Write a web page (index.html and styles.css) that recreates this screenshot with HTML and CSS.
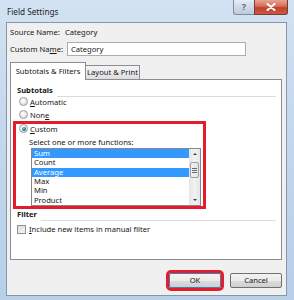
FILE: index.html
```html
<!DOCTYPE html>
<html>
<head>
<meta charset="utf-8">
<link rel="stylesheet" href="styles.css">
</head>
<body>
<div class="window">
  <div class="titlebar">
    <span class="title">Field Settings</span>
    <div class="caption">
      <div class="cap-help">?</div>
      <div class="cap-close">
        <svg width="10" height="8" viewBox="0 0 10 8"><path d="M1.5 1 L8.5 7 M8.5 1 L1.5 7" stroke="#ffffff" stroke-width="2" stroke-linecap="round"/></svg>
      </div>
    </div>
  </div>
  <div class="client">
    <div class="row src"><span class="lbl lbl-src">Source Name:</span><span class="val">Category</span></div>
    <div class="row cust"><span class="lbl lbl-cust">Custom Na<u>m</u>e:</span><div class="input">Category</div></div>
    <div class="tabs">
      <div class="tab active">Subtotals &amp; Filters</div>
      <div class="tab">Layout &amp; Print</div>
    </div>
    <div class="panel">
      <div class="heading"><span class="htext">Subtotals</span><i class="rule"></i></div>
      <div class="opt"><span class="radio"></span><span><u>A</u>utomatic</span></div>
      <div class="opt"><span class="radio"></span><span>Non<u>e</u></span></div>
      <div class="highlight">
        <div class="opt opt-custom"><span class="radio on"></span><span><u>C</u>ustom</span></div>
        <div class="sel-label">Select one or more functions:</div>
        <div class="listbox">
          <div class="items">
            <div class="item sel">Sum</div>
            <div class="item">Count</div>
            <div class="item sel">Average</div>
            <div class="item">Max</div>
            <div class="item">Min</div>
            <div class="item">Product</div>
          </div>
          <div class="scroll">
            <div class="arrow up"></div>
            <div class="thumb"><i></i><i></i><i></i></div>
            <div class="spacer"></div>
            <div class="arrow down"></div>
          </div>
        </div>
      </div>
      <div class="heading heading-filter"><span class="htext">Filter</span><i class="rule"></i></div>
      <div class="opt opt-check"><span class="check"></span><span><u>I</u>nclude new items in manual filter</span></div>
    </div>
    <div class="buttons">
      <div class="btn ok">OK</div>
      <div class="btn">Cancel</div>
    </div>
  </div>
</div>
</body>
</html>
```

FILE: styles.css
```css
html, body {
  margin: 0;
  padding: 0;
}
body {
  width: 294px;
  height: 300px;
  overflow: hidden;
  font-family: "Noto Sans", "DejaVu Sans", sans-serif;
  font-size: 7.6px;
  color: #161616;
  background: #ffffff;
}
u { text-decoration: underline; text-underline-offset: 1px; }

.window {
  width: 294px;
  height: 300px;
  box-sizing: border-box;
  padding: 0 7px 4px 6px;
  display: flex;
  flex-direction: column;
  background: linear-gradient(180deg, #d3e2f2 0%, #c4d8ee 40%, #b8cfe8 100%);
}

.titlebar {
  height: 22px;
  display: flex;
  justify-content: space-between;
  align-items: flex-start;
  flex-shrink: 0;
}
.title {
  margin-top: 6px;
  margin-left: 1px;
  font-size: 8.2px;
  line-height: 12px;
  color: #1e1e1e;
}
.caption {
  display: flex;
  margin-right: -1px;
}
.cap-help {
  width: 21px;
  height: 15px;
  box-sizing: border-box;
  border: 1px solid #7f8fa3;
  border-top: none;
  border-right: none;
  border-radius: 0 0 0 3px;
  background: linear-gradient(180deg, #e6edf5 0%, #cfdae6 50%, #bccadb 100%);
  color: #5a6a7e;
  font-size: 9px;
  line-height: 14px;
  text-align: center;
  font-weight: bold;
}
.cap-close {
  width: 34px;
  height: 15px;
  box-sizing: border-box;
  border: 1px solid #7a3b33;
  border-top: none;
  border-radius: 0 0 3px 0;
  background: linear-gradient(180deg, #e8a493 0%, #d56d57 45%, #c0402b 55%, #cf5a40 100%);
  display: flex;
  align-items: center;
  justify-content: center;
}

.client {
  flex: 1;
  background: #f0f0f0;
  border: 1px solid #8797aa;
  padding: 0 4px 0 3px;
  display: flex;
  flex-direction: column;
}

.row {
  display: flex;
  align-items: center;
}
.src {
  margin-top: 4px;
  height: 10px;
}
.lbl-src { width: 55px; }
.cust {
  margin-top: 5px;
  height: 14px;
}
.lbl-cust { width: 57px; }
.input {
  width: 179px;
  height: 14px;
  box-sizing: border-box;
  border: 1px solid #abadb3;
  background: #ffffff;
  padding-left: 3px;
  line-height: 12px;
}

.tabs {
  margin-top: 6px;
  height: 17px;
  display: flex;
  align-items: flex-end;
  position: relative;
  z-index: 1;
}
.tab {
  box-sizing: border-box;
  border: 1px solid #898c95;
  border-bottom: none;
  text-align: center;
  white-space: nowrap;
}
.tab.active {
  width: 76px;
  height: 18px;
  margin-bottom: -1px;
  background: #ffffff;
  line-height: 16px;
  border-radius: 1px 1px 0 0;
}
.tab:not(.active) {
  width: 54px;
  height: 14px;
  line-height: 13px;
  border-left: none;
  background: linear-gradient(180deg, #f4f4f4 0%, #ebebeb 50%, #dcdcdc 100%);
}

.panel {
  height: 181px;
  box-sizing: border-box;
  border: 1px solid #898c95;
  background: #ffffff;
  display: flex;
  flex-direction: column;
}

.heading {
  display: flex;
  align-items: flex-end;
  height: 10px;
  margin-top: 5px;
  padding-left: 6px;
  padding-right: 5px;
}
.htext {
  font-weight: bold;
  line-height: 10px;
}
.rule {
  flex: 1;
  height: 1px;
  background: #dcdcdc;
  margin-left: 4px;
  margin-bottom: -2px;
}
.heading-filter { margin-top: 0; }

.opt {
  display: flex;
  align-items: center;
  height: 13px;
  padding-left: 8px;
}
.radio {
  width: 9px;
  height: 9px;
  box-sizing: border-box;
  border-radius: 50%;
  border: 1px solid #9a9a9a;
  background: radial-gradient(circle at 40% 35%, #ffffff 0%, #e8e8e8 55%, #d0d0d0 100%);
  margin-right: 2px;
  position: relative;
  flex-shrink: 0;
}
.radio.on::after {
  content: "";
  position: absolute;
  left: 1.5px;
  top: 1.5px;
  width: 4px;
  height: 4px;
  border-radius: 50%;
  background: radial-gradient(circle at 40% 35%, #6fc0e0 0%, #1f6f95 60%, #134e6c 100%);
}

.highlight {
  margin-left: 2px;
  width: 193px;
  height: 88px;
  box-sizing: border-box;
  border: 3px solid #e31d2b;
  display: flex;
  flex-direction: column;
}
.opt-custom {
  height: 9px;
  padding-left: 3px;
}
.sel-label {
  margin-top: 4px;
  height: 10px;
  line-height: 10px;
  padding-left: 13px;
}
.listbox {
  margin-top: 1px;
  margin-left: 15px;
  width: 170px;
  height: 58px;
  box-sizing: border-box;
  border: 1px solid #828790;
  display: flex;
  background: #ffffff;
}
.items {
  flex: 1;
}
.item {
  height: 9.33px;
  line-height: 9.33px;
  padding-left: 2px;
}
.item.sel {
  background: #3399ff;
  color: #ffffff;
}
.scroll {
  width: 11px;
  background: linear-gradient(90deg, #e6e6e6 0%, #f2f2f2 50%, #e6e6e6 100%);
  display: flex;
  flex-direction: column;
  align-items: center;
}
.arrow {
  width: 11px;
  height: 11px;
  position: relative;
}
.arrow::after {
  content: "";
  position: absolute;
  left: 3.5px;
  width: 0;
  height: 0;
  border-left: 2px solid transparent;
  border-right: 2px solid transparent;
}
.arrow.up::after {
  top: 4px;
  border-bottom: 2px solid #404040;
}
.arrow.down::after {
  top: 5px;
  border-top: 2px solid #404040;
}
.thumb {
  margin-top: 2px;
  width: 9px;
  height: 16px;
  box-sizing: border-box;
  border: 1px solid #9b9ea4;
  border-radius: 2px;
  background: linear-gradient(90deg, #f2f2f2 0%, #e2e3e6 100%);
  display: flex;
  flex-direction: column;
  justify-content: center;
  align-items: center;
  gap: 1px;
}
.thumb i {
  width: 5px;
  height: 1px;
  background: #6a6a6a;
}
.spacer { flex: 1; }

.opt-check {
  margin-top: 4px;
  height: 12px;
  padding-left: 6px;
}
.check {
  width: 9px;
  height: 9px;
  box-sizing: border-box;
  border: 1px solid #8e8f8f;
  background: linear-gradient(135deg, #dcdcdc 0%, #f6f6f6 100%);
  margin-right: 3px;
  flex-shrink: 0;
}

.buttons {
  margin-top: 13px;
  display: flex;
  justify-content: flex-end;
  gap: 9px;
}
.btn {
  width: 52px;
  height: 15px;
  box-sizing: border-box;
  border: 1px solid #707070;
  border-radius: 2px;
  background: linear-gradient(180deg, #f2f2f2 0%, #ebebeb 50%, #dddddd 51%, #cfcfcf 100%);
  text-align: center;
  line-height: 13px;
}
.btn.ok {
  border-color: #3c7fb1;
  outline: 3px solid #e31d2b;
  outline-offset: 0;
}
```
